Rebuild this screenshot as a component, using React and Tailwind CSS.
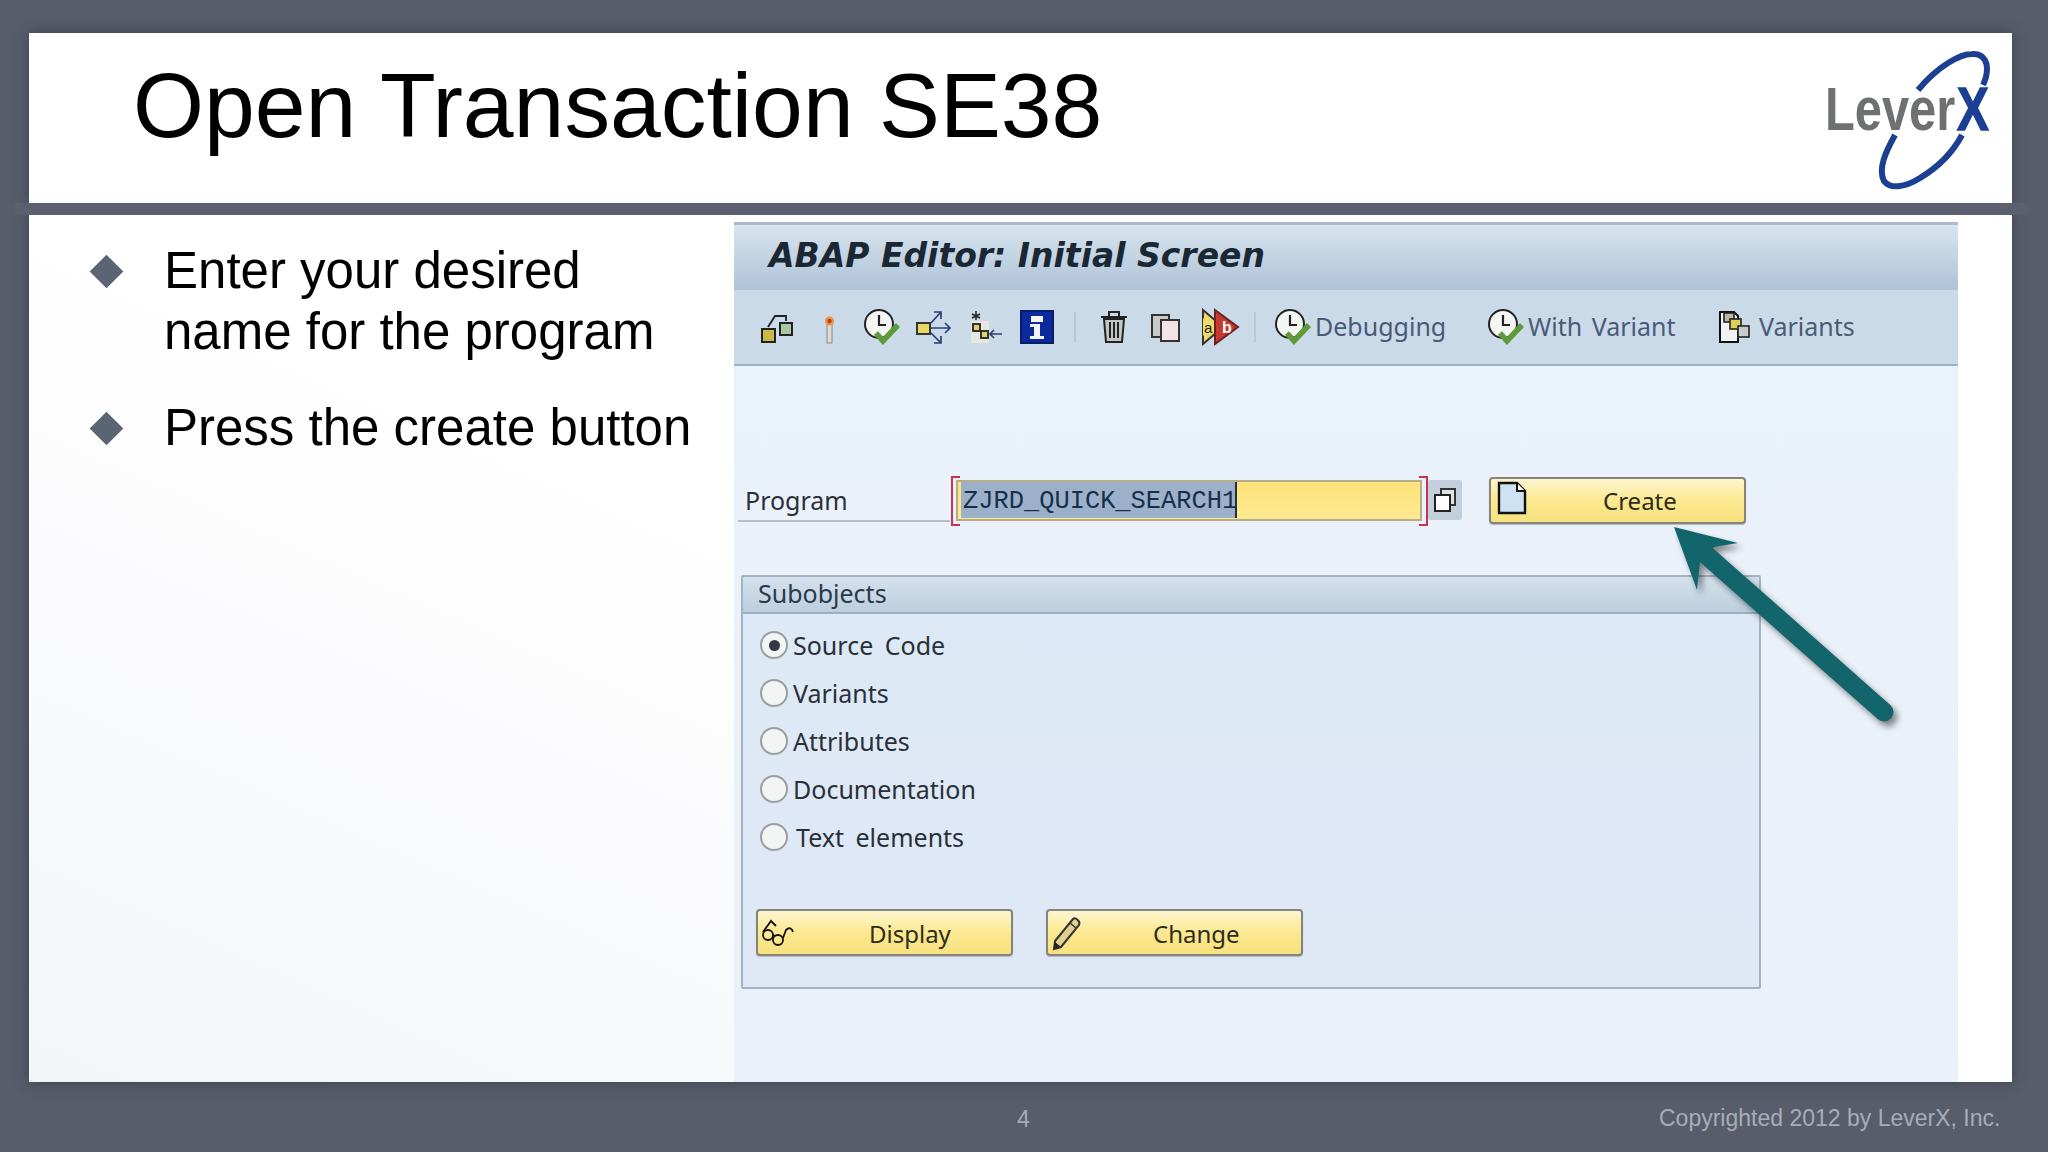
import React from 'react';

const Clock = () => (
  <svg width="38" height="36" viewBox="0 0 38 36" fill="none">
    <circle cx="16" cy="15" r="14" fill="#f4f6f4" stroke="#222" strokeWidth="2" />
    <path d="M16 6v10h7" stroke="#222" strokeWidth="2.2" />
    <path d="M13 24l7 8 15-16" stroke="#5f9a3a" strokeWidth="5.5" />
  </svg>
);

const Hierarchy = () => (
  <svg width="36" height="36" viewBox="0 0 36 36" fill="none">
    <rect x="3" y="20" width="13" height="13" fill="#c9b84a" stroke="#222" strokeWidth="2" />
    <rect x="21" y="14" width="12" height="12" fill="#a8c9a0" stroke="#222" strokeWidth="2" />
    <path d="M9 18l7-11h11v5" stroke="#222" strokeWidth="1.8" />
  </svg>
);

const Pin = () => (
  <svg width="36" height="36" viewBox="0 0 36 36" fill="none">
    <rect x="16" y="15" width="5" height="19" fill="#dcdcd4" stroke="#8a8a80" />
    <circle cx="18.5" cy="12" r="4.5" fill="#e8963a" />
    <circle cx="18.5" cy="12" r="2.2" fill="#c23a20" />
  </svg>
);

const Arrows = () => (
  <svg width="36" height="36" viewBox="0 0 36 36" fill="none">
    <rect x="1" y="14" width="13" height="11" fill="#e6d860" stroke="#333" strokeWidth="2" />
    <path d="M14 19h20M29 14l5 5-5 5M15 14l9-10M18 3h7v7M15 24l9 9M18 34h7v-7" stroke="#2c3f7a" strokeWidth="1.7" />
  </svg>
);

const TreeMove = () => (
  <svg width="36" height="36" viewBox="0 0 36 36" fill="none">
    <path d="M3 12h18v22H3z" fill="#e8e8e0" />
    <path d="M8 2v9M4 5l8 4M12 5l-8 4" stroke="#222" strokeWidth="1.5" />
    <rect x="5" y="15" width="7" height="7" fill="#dcd070" stroke="#222" strokeWidth="1.8" />
    <rect x="13" y="22" width="7" height="7" fill="#dcd070" stroke="#222" strokeWidth="1.8" />
    <path d="M34 25H22M26 21l-4 4 4 4" stroke="#2c3f7a" strokeWidth="1.7" />
  </svg>
);

const Info = () => (
  <svg width="34" height="34" viewBox="0 0 34 34">
    <rect x="1" y="1" width="32" height="32" fill="#0c2a9c" stroke="#0a1d66" strokeWidth="2" />
    <path d="M11 6h12v6H11zM10 14h10v12h4v3H10v-3h4v-9h-4z" fill="#f2f4f2" />
  </svg>
);

const Trash = () => (
  <svg width="36" height="36" viewBox="0 0 36 36" fill="none">
    <path d="M8 10h20l-2 23H10z" fill="#c4c6c6" stroke="#222" strokeWidth="2" />
    <path d="M5 8h26M13 7V3h10v4M14 13v16M18 13v16M22 13v16" stroke="#222" strokeWidth="2" />
  </svg>
);

const CopyDoc = () => (
  <svg width="36" height="36" viewBox="0 0 36 36">
    <rect x="4" y="6" width="17" height="22" fill="#c8cac8" stroke="#333" strokeWidth="2" />
    <rect x="13" y="11" width="18" height="21" fill="#f2e4e4" stroke="#333" strokeWidth="2" />
  </svg>
);

const AbArrows = () => (
  <svg width="40" height="38" viewBox="0 0 40 38">
    <path d="M3 2l20 17L3 36z" fill="#eedc6a" stroke="#333" strokeWidth="2" />
    <path d="M15 2l23 17-23 17z" fill="#c43a32" stroke="#6a2320" strokeWidth="2" />
    <path d="M3 10l10 9-10 9z" fill="#eedc6a" />
    <text x="4" y="25" fontSize="15" fontFamily="'Liberation Sans', sans-serif" fill="#222">a</text>
    <text x="22" y="25" fontSize="16" fontWeight="700" fontFamily="'Liberation Sans', sans-serif" fill="#fff">b</text>
  </svg>
);

const VariantDocs = () => (
  <svg width="36" height="36" viewBox="0 0 36 36">
    <path d="M3 3h14l4 4v26H3z" fill="#f0f2f4" stroke="#111" strokeWidth="2" />
    <rect x="7" y="4" width="10" height="9" fill="#b8b8a8" stroke="#222" strokeWidth="1.6" />
    <rect x="13" y="10" width="11" height="10" fill="#dccf58" stroke="#222" strokeWidth="1.6" />
    <rect x="21" y="17" width="11" height="11" fill="#c8ccc8" stroke="#222" strokeWidth="1.6" />
  </svg>
);

const Sep = () => <div className="w-[2px] h-[30px] bg-[#b8c8d8]" />;

const Glasses = () => (
  <svg className="-ml-[4px]" width="36" height="30" viewBox="0 0 36 30" fill="none" stroke="#111" strokeWidth="1.8">
    <circle cx="8" cy="17" r="5" />
    <circle cx="18" cy="22" r="5" />
    <path d="M3 14L11 3l5 5M23 20l3-8c3-3 6-2 7 2M13 17l2 1" />
  </svg>
);

const Pencil = () => (
  <svg className="-ml-[4px]" width="34" height="36" viewBox="0 0 34 36" fill="none">
    <path d="M5 26L23 4c2-2 8 2 6 6L11 32l-7 2z" fill="#e2cf92" stroke="#333" strokeWidth="2" />
    <path d="M4 34l1-7 6 5z" fill="#222" />
    <path d="M20 8l6 5" stroke="#333" strokeWidth="1.5" />
  </svg>
);

const NewDoc = () => (
  <svg className="-mt-[4px]" width="30" height="34" viewBox="0 0 30 34">
    <path d="M2 2h18l8 8v22H2z" fill="#cfe2f3" stroke="#111" strokeWidth="2.4" />
    <path d="M20 2v8h8" fill="#fff" stroke="#111" strokeWidth="2" />
  </svg>
);

const SapButton = ({ icon, label, textLeft, className }) => (
  <div className={`relative flex items-center h-[47px] w-[257px] pl-[6px] rounded-[4px] border-2 border-[#85837a] bg-gradient-to-b from-[#fdf6cf] via-[#fce88f] to-[#f7e27f] shadow-[0_1px_1px_#b0b8c4] ${className || ''}`}>
    <div className="w-[40px] flex items-center">{icon}</div>
    <span className={`${textLeft} pt-[2px] text-[24px] leading-none text-[#2e2c1c]`}>{label}</span>
  </div>
);

const Radio = ({ label, checked, indent }) => (
  <div className="flex items-center h-[28px]">
    <div className="flex items-center justify-center w-[28px] h-[28px] rounded-full border-2 border-[#9a9e9e] bg-[#f3f5f4]">
      {checked && <div className="w-[11px] h-[11px] rounded-full bg-[#333842]" />}
    </div>
    <span className={`${indent} text-[25px] leading-none [word-spacing:5px] text-[#2a3038]`}>{label}</span>
  </div>
);

const Logo = () => (
  <svg width="268" height="210" viewBox="0 0 268 210" className="shrink-0">
    <path d="M138 70C158 46 180 34 192 34c13-1 17 10 14 23-1 3-2 6-3 8" fill="none" stroke="#1c3f94" strokeWidth="6" />
    <path d="M115 115c-10 18-17 34-11 46 6 8 20 7 36-3 20-12 34-28 42-43" fill="none" stroke="#1c3f94" strokeWidth="6" />
    <text transform="translate(45 110) scale(0.8 1)" fontFamily="'Liberation Sans', sans-serif" fontWeight="700" fontSize="61" fill="#6f7072">Lever</text>
    <text transform="translate(177 110) scale(0.78 1)" fontFamily="'Liberation Sans', sans-serif" fontWeight="700" fontSize="61" fill="#1c3f94" stroke="#1c3f94" strokeWidth="1.5">X</text>
  </svg>
);

const App = () => {
  return (
    <div className="relative w-[2048px] h-[1152px] overflow-hidden bg-[#585c6b] pt-[33px] font-['Liberation_Sans',sans-serif]">
      {/* Title */}
      <div className="ml-[29px] mr-[36px] h-[170px] bg-white flex justify-between shadow-[0_0_12px_#3c3f4c] pl-[104px]">
        <h1 className="text-[91.3px] leading-none text-black pt-[27px]">Open Transaction SE38</h1>
        <div className="-mr-[36px] -mt-[13px]">
          <Logo />
        </div>
      </div>

      {/* Divider */}
      <div className="relative ml-[15px] mr-[20px] h-[12px] bg-[#5b5f6e]" />

      {/* Slide body */}
      <div className="ml-[29px] mr-[36px] h-[867px] flex bg-gradient-to-tr from-[#f4f5f9] via-white to-white shadow-[0_0_12px_#3c3f4c]">
        <div className="w-[705px] pl-[61px] pt-[25px]">
          <div className="flex">
            <div className="w-[33px] h-[33px] mt-[15px] rotate-45 scale-[0.72] bg-[#5b6472] shrink-0" />
            <p className="ml-[41px] text-[51px] leading-[61px] text-black">
              Enter your desired<br />name for the program
            </p>
          </div>
          <div className="flex mt-[35px]">
            <div className="w-[33px] h-[33px] mt-[15px] rotate-45 scale-[0.72] bg-[#5b6472] shrink-0" />
            <p className="ml-[41px] text-[51px] leading-[61px] text-black">Press the create button</p>
          </div>
        </div>

        {/* SAP window */}
        <div className="relative w-[1224px] mt-[7px] flex flex-col bg-gradient-to-b from-[#e9f2fb] to-[#ecf0f8] font-['Noto_Sans',sans-serif]">
          <div className="h-[68px] border-t-[3px] border-[#a9bac9] bg-gradient-to-b from-[#d8e4ef] to-[#aec3d7] pl-[35px] pt-[12px]">
            <span className="text-[33px] leading-[38px] font-bold italic text-[#1b2733] font-['DejaVu_Sans',sans-serif]">ABAP Editor: Initial Screen</span>
          </div>
          <div className="h-[76px] flex items-center border-b-2 border-[#9fb0c0] bg-[#cbdae8] text-[#4a5a78] text-[25px] [word-spacing:3px] pl-[25px]">
            <div className="w-[52px]"><Hierarchy /></div>
            <div className="w-[52px]"><Pin /></div>
            <div className="w-[53px]"><Clock /></div>
            <div className="w-[52px]"><Arrows /></div>
            <div className="w-[52px]"><TreeMove /></div>
            <div className="w-[54px]"><Info /></div>
            <Sep />
            <div className="ml-[20px] w-[52px]"><Trash /></div>
            <div className="w-[52px]"><CopyDoc /></div>
            <div className="w-[54px]"><AbArrows /></div>
            <Sep />
            <div className="ml-[18px] w-[41px]"><Clock /></div>
            <span className="w-[130px]">Debugging</span>
            <div className="ml-[42px] w-[41px]"><Clock /></div>
            <span className="w-[149px]">With Variant</span>
            <div className="ml-[40px] w-[42px]"><VariantDocs /></div>
            <span>Variants</span>
          </div>

          {/* Program row */}
          <div className="flex items-center h-[46px] mt-[111px]">
            <div className="ml-[4px] w-[212px] h-[44px] pl-[7px] pt-[4px] flex items-center border-b-2 border-[#b8bec4] text-[25px] text-[#2a3038]">Program</div>
            <div className="relative ml-[6px] w-[466px] h-[41px] flex items-center bg-gradient-to-b from-[#fde27a] to-[#fdea90] border-2 border-[#b5ac88]">
              <div className="absolute -left-[7px] -top-[6px] w-[9px] h-[50px] border-l-2 border-t-2 border-b-2 border-[#c8344e]" />
              <div className="absolute -right-[8px] -top-[6px] w-[9px] h-[50px] border-r-2 border-t-2 border-b-2 border-[#c8344e]" />
              <span className="ml-[3px] h-[36px] w-[276px] pl-[2px] bg-[#9cb1c9] border-r-2 border-[#27303a] text-[25.4px] leading-[39px] font-['Liberation_Mono',monospace] text-[#16304a]">ZJRD_QUICK_SEARCH1</span>
            </div>
            <div className="ml-[6px] w-[34px] h-[40px] flex items-center justify-center bg-[#c3cfdc] rounded-[2px]">
              <svg width="24" height="26" viewBox="0 0 24 26">
                <rect x="8" y="2" width="14" height="16" fill="#dde2e8" stroke="#333" strokeWidth="2" />
                <rect x="2" y="8" width="15" height="16" fill="#fff" stroke="#222" strokeWidth="2" />
              </svg>
            </div>
            <SapButton className="ml-[27px]" icon={<NewDoc />} label="Create" textLeft="ml-[66px]" />
          </div>

          {/* Subobjects */}
          <div className="ml-[7px] mt-[52px] w-[1020px] h-[414px] border-2 border-[#a3b3c4] rounded-[2px] bg-gradient-to-b from-[#dde9f6] to-[#e0e8f6]">
            <div className="h-[37px] pl-[15px] pb-[2px] flex items-center border-b-2 border-[#9fb0c0] bg-gradient-to-b from-[#d4e1ec] to-[#bccfdf] text-[25px] text-[#2a3a4c]">Subobjects</div>
            <div className="flex flex-col gap-[20px] pl-[17px] pt-[17px]">
              <Radio label="Source Code" checked indent="ml-[5px]" />
              <Radio label="Variants" indent="ml-[5px]" />
              <Radio label="Attributes" indent="ml-[5px]" />
              <Radio label="Documentation" indent="ml-[5px]" />
              <Radio label="Text elements" indent="ml-[8px]" />
            </div>
            <div className="flex gap-[33px] pl-[13px] mt-[58px]">
              <SapButton icon={<Glasses />} label="Display" textLeft="ml-[65px]" />
              <SapButton icon={<Pencil />} label="Change" textLeft="ml-[59px]" />
            </div>
          </div>

          {/* Callout arrow */}
          <svg className="absolute left-[900px] top-[280px] [filter:drop-shadow(4px_5px_3px_rgba(0,0,0,0.45))]" width="280" height="240" viewBox="1634 502 280 240">
            <path d="M1674 527L1738 543L1714 547L1700 562L1697 590Z" fill="#12656b" />
            <path d="M1704 553L1884 712" stroke="#12656b" strokeWidth="19" strokeLinecap="round" />
          </svg>
        </div>
      </div>

      {/* Footer */}
      <div className="relative h-[70px] text-[#a8acb8] text-[23px] leading-none">
        <span className="absolute left-[1017px] top-[26px]">4</span>
        <span className="absolute left-[1659px] top-[25px]">Copyrighted 2012 by LeverX, Inc.</span>
      </div>
    </div>
  );
};

export default App;
